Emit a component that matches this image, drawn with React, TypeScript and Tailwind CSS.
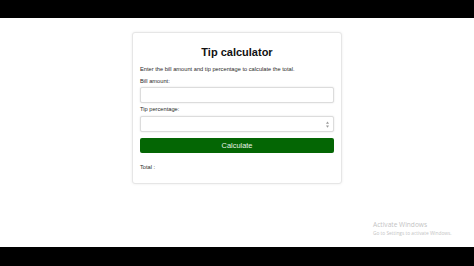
import React from "react";

const font = { fontFamily: '"Liberation Sans", Arial, sans-serif' };

function Field({ spinner }: { spinner?: boolean }) {
  return (
    <div className="relative h-[16px] rounded-[2px] border border-[#dcdcdc] bg-white shadow-[0_0_2px_rgba(0,0,0,0.12)]">
      {spinner && (
        <div className="absolute right-[4px] top-[4px] flex flex-col items-center gap-[1px]">
          <svg width="3" height="3" viewBox="0 0 4 3">
            <path d="M0 3 L2 0 L4 3 Z" fill="#9a9a9a" />
          </svg>
          <svg width="3" height="3" viewBox="0 0 4 3">
            <path d="M0 0 L2 3 L4 0 Z" fill="#9a9a9a" />
          </svg>
        </div>
      )}
    </div>
  );
}

export default function App() {
  return (
    <div className="flex h-[266px] w-[474px] flex-col bg-black" style={font}>
      <div className="h-[18px] bg-black" />
      <div className="relative flex-1 bg-white">
        <div className="mx-auto mt-[14px] w-[210px] rounded-[3px] border border-[#e6e6e6] bg-white px-[7px] pb-[12px] pt-[13px] shadow-[0_0_3px_rgba(0,0,0,0.08)]">
          <h1 className="text-center text-[11px] font-bold leading-[13px] text-[#111]">
            Tip calculator
          </h1>
          <p className="mt-[6px] text-[5.7px] leading-[8px] text-[#2a2a2a]">
            Enter the bill amount and tip percentage to calculate the total.
          </p>
          <p className="mt-[4px] text-[5.7px] leading-[8px] text-[#2a2a2a]">Bill amount:</p>
          <div className="mt-[2px]">
            <Field />
          </div>
          <p className="mt-[2px] text-[5.7px] leading-[8px] text-[#2a2a2a]">Tip percentage:</p>
          <div className="mt-[3px]">
            <Field spinner />
          </div>
          <button className="mt-[6px] flex h-[15px] w-full items-center justify-center rounded-[2px] bg-[#046604] text-[7.4px] text-[#e8f2e8]">
            Calculate
          </button>
          <p className="mt-[10px] text-[5.7px] leading-[8px] text-[#2a2a2a]">Total :</p>
        </div>
        <div className="absolute left-[373px] top-[202px] text-[#c4c4c4]" style={{ fontFamily: '"Open Sans", "Noto Sans", sans-serif' }}>
          <div className="text-[6.6px] leading-[9px]">Activate Windows</div>
          <div className="mt-[1px] text-[4.8px] leading-[7px]">Go to Settings to activate Windows.</div>
        </div>
      </div>
      <div className="h-[19px] bg-black" />
    </div>
  );
}
